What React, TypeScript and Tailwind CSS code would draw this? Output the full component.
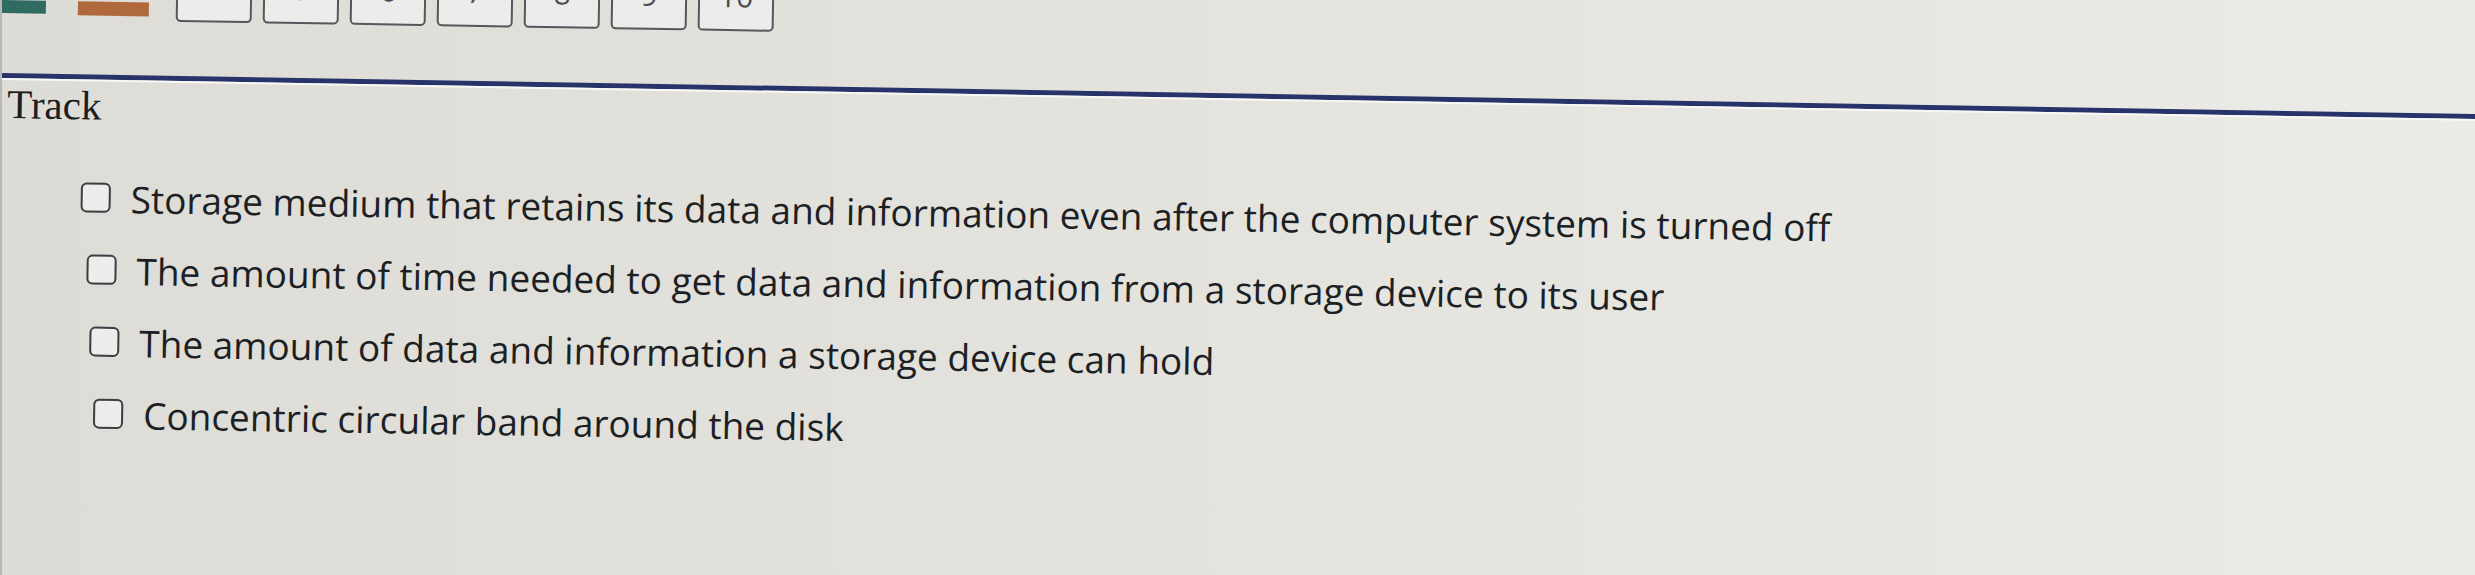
import React from "react";

const items = [
  { t: "Storage medium that retains its data and information even after the computer system is turned off", pl: "pl-[82px]" },
  { t: "The amount of time needed to get data and information from a storage device to its user", pl: "pl-[89px]" },
  { t: "The amount of data and information a storage device can hold", pl: "pl-[93px]" },
  { t: "Concentric circular band around the disk", pl: "pl-[98px]" },
];

const pages = ["4", "5", "6", "7", "8", "9", "10"];

export default function App() {
  return (
    <div className="w-[2475px] h-[575px] overflow-hidden bg-gradient-to-r from-[#dddcd6] via-[#e4e3de] to-[#ebebe7] border-l-2 border-[#b9b8b2]">
      <div className="origin-top-left rotate-[0.95deg] w-[2540px]">
        <div className="flex items-start h-[19px]">
          <div className="w-[44px] h-[13px] bg-[#2f6b63]" />
          <div className="ml-[32px] w-[71px] h-[14px] bg-[#b0683d]" />
          <div className="ml-[27px] flex gap-[11px] -mt-[41px]">
            {pages.map((p) => (
              <div
                key={p}
                className="w-[76px] h-[60px] border-2 border-[#55575c] rounded-[5px] bg-[#ececea] flex items-end justify-center pb-[18px] text-[30px] leading-none text-[#4a4c50] font-['Open_Sans',sans-serif]"
              >
                {p}
              </div>
            ))}
          </div>
        </div>
        <div className="mt-[54px] h-[5px] bg-[#28336a]" />
        <div className="h-[2px] bg-[#f7f7f5]" />
        <div className="mt-[4px] pl-[7px] text-[41px] leading-none text-[#1a1d21] font-['Liberation_Serif',serif]">
          Track
        </div>
        <div className="mt-[35px] flex flex-col">
          {items.map((it) => (
            <div key={it.t} className={`h-[72px] flex items-center ${it.pl} gap-[20px]`}>
              <div className="w-[30px] h-[30px] shrink-0 rounded-[6px] border-[2.5px] border-[#3a3d42] bg-[#ededeb]" />
              <span className="text-[37px] leading-none text-[#1c1f24] font-['Open_Sans',sans-serif] whitespace-nowrap">
                {it.t}
              </span>
            </div>
          ))}
        </div>
      </div>
    </div>
  );
}
